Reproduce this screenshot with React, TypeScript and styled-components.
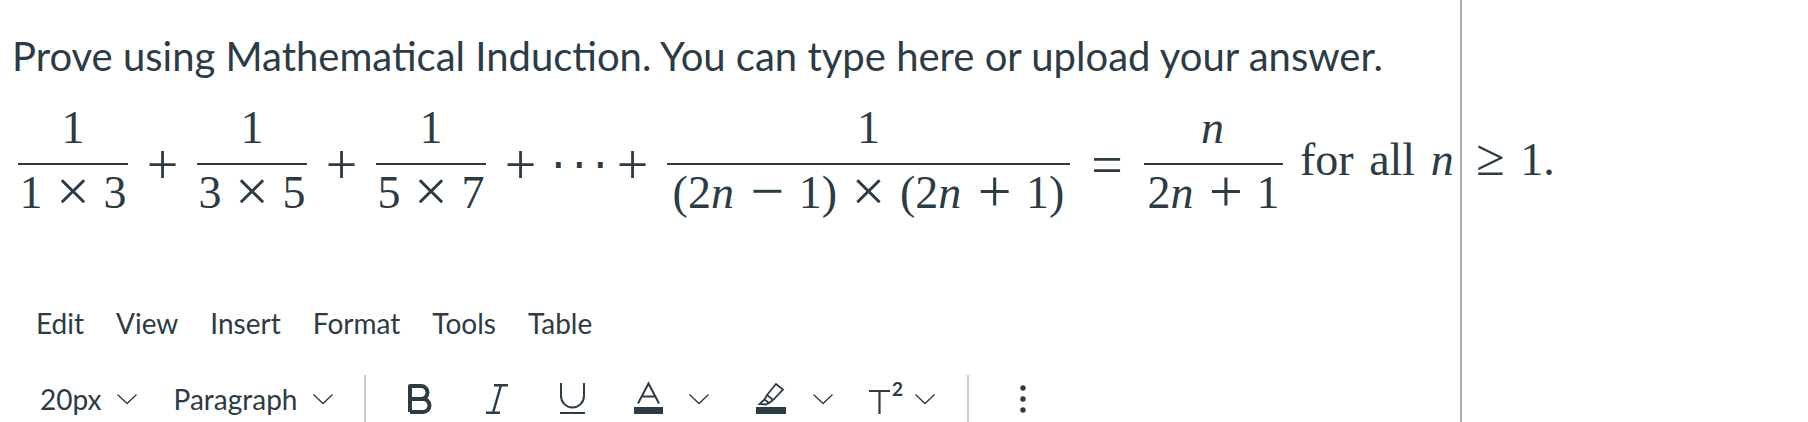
import styled, { createGlobalStyle } from "styled-components";

const GlobalStyle = createGlobalStyle`
  html, body {
    margin: 0;
    background: #fff;
    color: #2d3b45;
    font-family: Lato, "Open Sans", sans-serif;
  }
`;

const Page = styled.div`
  width: 1462px;
  height: 422px;
  box-sizing: border-box;
  border-right: 2px solid #aaaeb1;
  white-space: nowrap;
`;

const Prompt = styled.p`
  margin: 0;
  padding: 33px 0 0 12px;
  font-size: 40px;
  line-height: 46px;
  font-variant-ligatures: common-ligatures;
`;

const MathLine = styled.div`
  display: flex;
  align-items: center;
  gap: 18px;
  margin-top: 26px;
  padding-left: 18px;
  height: 112px;
  font-family: "Liberation Serif", serif;
  font-size: 46px;
`;

const Fraction = styled.div<{ $width: number }>`
  width: ${(p) => p.$width}px;
  display: flex;
  flex-direction: column;
  align-items: center;
  flex: none;
`;

const Numerator = styled.div`
  height: 48px;
  line-height: 48px;
  margin-bottom: 11px;
`;

const Denominator = styled.div<{ $spread?: number }>`
  height: 50px;
  line-height: 50px;
  margin-top: 3px;
  word-spacing: ${(p) => p.$spread ?? 2}px;
`;

const Bar = styled.div`
  width: 100%;
  height: 2px;
  background: #2d3b45;
`;

const Operator = styled.span<{ $width?: number }>`
  width: ${(p) => p.$width ?? 33}px;
  flex: none;
  margin-top: 7px;
  text-align: center;
  font-size: 56px;
  line-height: 56px;
`;

const Dots = styled.span`
  width: 43px;
  flex: none;
  margin: 7px 4px 0 -4px;
  text-align: center;
  letter-spacing: 6px;
`;

const Variable = styled.i`
  letter-spacing: 2px;
`;

const BinaryOp = styled.span`
  font-size: 60px;
  line-height: 0;
  vertical-align: -3px;
`;

const Relation = styled.span`
  margin-left: 5px;
  font-size: 52px;
  line-height: 0;
`;

const Trailing = styled.span`
  flex: none;
  margin: -3px 0 0 -1px;
  word-spacing: 4px;
`;

const Menu = styled.nav`
  display: flex;
  gap: 32px;
  margin-top: 89px;
  padding-left: 36px;
  font-size: 28px;
  line-height: 34px;
`;

const Toolbar = styled.div`
  display: flex;
  align-items: center;
  height: 47px;
  margin-top: 35px;
  padding-left: 40px;
`;

const SelectButton = styled.div<{ $left?: number }>`
  display: flex;
  align-items: center;
  gap: 15px;
  margin-left: ${(p) => p.$left ?? 0}px;
  font-size: 28px;
  line-height: 34px;
`;

const Divider = styled.div<{ $left: number }>`
  width: 2px;
  height: 47px;
  flex: none;
  margin-left: ${(p) => p.$left}px;
  background: #c7cdd1;
`;

const ToolButton = styled.div<{ $left: number; $width?: number }>`
  width: ${(p) => p.$width ?? 40}px;
  flex: none;
  margin-left: ${(p) => p.$left}px;
  display: flex;
  justify-content: center;
  align-items: center;
`;

const Icon = styled.svg`
  display: block;
  flex: none;
  overflow: visible;
  fill: none;
  stroke: #2d3b45;
`;

const Chevron = () => (
  <Icon width="20" height="10" viewBox="0 0 20 10" strokeWidth="1.3">
    <polyline points="0.5,0.5 10,9.5 19.5,0.5" />
  </Icon>
);

const App = () => {
  return (
    <>
      <GlobalStyle />
      <Page>
        <Prompt>Prove using Mathematical Induction. You can type here or upload your answer.</Prompt>
        <MathLine>
          <Fraction $width={110}>
            <Numerator>1</Numerator>
            <Bar />
            <Denominator>
              1 <BinaryOp>×</BinaryOp> 3
            </Denominator>
          </Fraction>
          <Operator>+</Operator>
          <Fraction $width={110}>
            <Numerator>1</Numerator>
            <Bar />
            <Denominator>
              3 <BinaryOp>×</BinaryOp> 5
            </Denominator>
          </Fraction>
          <Operator>+</Operator>
          <Fraction $width={110}>
            <Numerator>1</Numerator>
            <Bar />
            <Denominator>
              5 <BinaryOp>×</BinaryOp> 7
            </Denominator>
          </Fraction>
          <Operator>+</Operator>
          <Dots>⋅⋅⋅</Dots>
          <Operator>+</Operator>
          <Fraction $width={403}>
            <Numerator>1</Numerator>
            <Bar />
            <Denominator $spread={3}>
              (2<Variable>n</Variable> <BinaryOp>−</BinaryOp> 1) <BinaryOp>×</BinaryOp> (2<Variable>n</Variable>{" "}
              <BinaryOp>+</BinaryOp> 1)
            </Denominator>
          </Fraction>
          <Operator $width={38}>=</Operator>
          <Fraction $width={139}>
            <Numerator>
              <Variable>n</Variable>
            </Numerator>
            <Bar />
            <Denominator>
              2<Variable>n</Variable> <BinaryOp>+</BinaryOp> 1
            </Denominator>
          </Fraction>
          <Trailing>
            for all <Variable>n</Variable> <Relation>≥</Relation> 1.
          </Trailing>
        </MathLine>
        <Menu>
          <span>Edit</span>
          <span>View</span>
          <span>Insert</span>
          <span>Format</span>
          <span>Tools</span>
          <span>Table</span>
        </Menu>
        <Toolbar>
          <SelectButton>
            20px
            <Chevron />
          </SelectButton>
          <SelectButton $left={37}>
            Paragraph
            <Chevron />
          </SelectButton>
          <Divider $left={31} />
          <ToolButton $left={35}>
            <Icon width="26" height="30" viewBox="0 0 26 30" strokeWidth="4" strokeLinejoin="round">
              <path d="M2 28 V2 H13 a6.5 6.5 0 0 1 0 13 H2 M13 15 H15 a6.5 6.5 0 0 1 0 13 H2" />
            </Icon>
          </ToolButton>
          <ToolButton $left={36}>
            <Icon width="22" height="30" viewBox="0 0 22 30" strokeWidth="2.4">
              <path d="M8 1.2 H22 M0 28.8 H14 M15 1.2 L7 28.8" />
            </Icon>
          </ToolButton>
          <ToolButton $left={36}>
            <Icon width="25" height="31" viewBox="0 0 25 31" strokeWidth="2">
              <path d="M1 0 V13 a11.5 11.5 0 0 0 23 0 V0 M0 30 H25" />
            </Icon>
          </ToolButton>
          <ToolButton $left={36}>
            <Icon width="29" height="31" viewBox="0 0 29 31" strokeWidth="2">
              <path d="M4 20.5 L14.5 0.5 L25 20.5 M7.5 13.5 H21.5" />
              <rect x="0" y="24" width="29" height="7" fill="#2d3b45" stroke="none" />
            </Icon>
          </ToolButton>
          <ToolButton $left={20} $width={20}>
            <Chevron />
          </ToolButton>
          <ToolButton $left={47} $width={30}>
            <Icon width="30" height="31" viewBox="0 0 30 31" strokeWidth="1.8">
              <path d="M11 12 L20 1 L27 6.5 L17 17 Z M11 12 L8.5 16.5 L13 20 L17 17 M8.5 16.5 L3.5 21 L9.5 21.5 L13 20" />
              <rect x="0" y="24" width="30" height="7" fill="#2d3b45" stroke="none" />
            </Icon>
          </ToolButton>
          <ToolButton $left={27} $width={20}>
            <Chevron />
          </ToolButton>
          <ToolButton $left={36} $width={32}>
            <Icon width="32" height="31" viewBox="0 0 32 31" strokeWidth="2.2">
              <path d="M0 8 H21 M10.5 8 V31" />
              <text x="23" y="13" fontFamily="Lato, sans-serif" fontSize="19" fontWeight="700" fill="#2d3b45" stroke="none">
                2
              </text>
            </Icon>
          </ToolButton>
          <ToolButton $left={14} $width={20}>
            <Chevron />
          </ToolButton>
          <Divider $left={32} />
          <ToolButton $left={51} $width={6}>
            <Icon width="6" height="28" viewBox="0 0 6 28">
              <g fill="#2d3b45" stroke="none">
                <circle cx="3" cy="3" r="2.7" />
                <circle cx="3" cy="14" r="2.7" />
                <circle cx="3" cy="25" r="2.7" />
              </g>
            </Icon>
          </ToolButton>
        </Toolbar>
      </Page>
    </>
  );
};

export default App;
